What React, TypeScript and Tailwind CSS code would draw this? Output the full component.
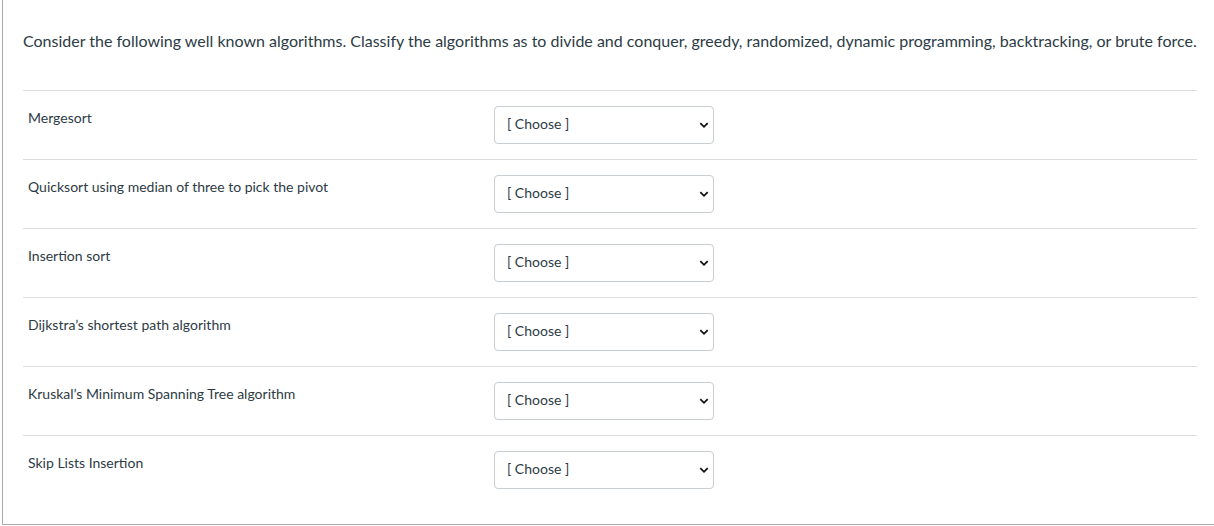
import React from 'react';

const items = [
  'Mergesort',
  'Quicksort using median of three to pick the pivot',
  'Insertion sort',
  'Dijkstra\u2019s shortest path algorithm',
  'Kruskal\u2019s Minimum Spanning Tree algorithm',
  'Skip Lists Insertion',
];

const Chevron = () => (
  <svg width="10" height="10" viewBox="0 0 10 10" className="pointer-events-none absolute right-[5px] top-1/2 -translate-y-1/2">
    <path d="M1.3 3.2 L5 6.8 L8.7 3.2" fill="none" stroke="#111" strokeWidth="1.8" />
  </svg>
);

const Row = ({ label }: { label: string }) => (
  <div className="flex border-t border-[#dddddd]">
    <div className="w-[471px] shrink-0 pl-[5px] pt-[17px] text-[14px] leading-[20px]">{label}</div>
    <div className="relative my-[15px] h-[38px] w-[220px]">
      <select
        defaultValue=""
        className="h-full w-full appearance-none rounded-[4px] border border-[#c7cdd1] bg-white pb-[3px] pl-[12px] text-[14px] text-[#2d3b45] outline-none"
        style={{ fontFamily: 'Lato, "Open Sans", sans-serif' }}
      >
        <option value="">[ Choose ]</option>
        <option>divide and conquer</option>
        <option>greedy</option>
        <option>randomized</option>
        <option>dynamic programming</option>
        <option>backtracking</option>
        <option>brute force</option>
      </select>
      <Chevron />
    </div>
  </div>
);

export default function App() {
  return (
    <div className="h-[526px] w-[1214px] bg-white" style={{ fontFamily: 'Lato, "Open Sans", sans-serif' }}>
      <div className="ml-[2px] border-b border-l border-[#aaaaaa] pb-[20px] pl-[20px] pr-[17px] pt-[29px] text-[#2d3b45]">
        <p className="mb-[37px] text-[16px] leading-[24px]">
          Consider the following well known algorithms. Classify the algorithms as to divide and conquer, greedy, randomized, dynamic programming, backtracking, or brute force.
        </p>
        {items.map((label) => (
          <Row key={label} label={label} />
        ))}
      </div>
    </div>
  );
}
